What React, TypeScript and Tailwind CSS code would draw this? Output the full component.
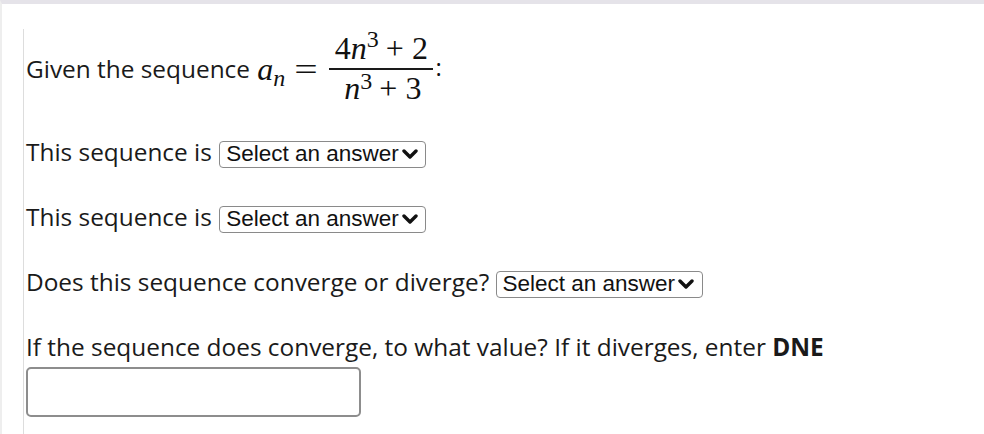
import React from "react";

function Chevron() {
  return (
    <svg width="16" height="10" viewBox="0 0 16 10" className="ml-[3px] shrink-0">
      <path d="M2 2 L8 8 L14 2" fill="none" stroke="#111" strokeWidth="3.4" strokeLinecap="round" strokeLinejoin="round" />
    </svg>
  );
}

function SelectBox() {
  return (
    <div className="inline-flex items-center h-[27px] w-[207px] border-[1.5px] border-[#8a8a8a] rounded-[4px] pl-[6px] pr-[6px] bg-white font-['Liberation_Sans',Arial,sans-serif] text-[22.5px] text-[#111] leading-none">
      <span className="whitespace-nowrap">Select an answer</span>
      <Chevron />
    </div>
  );
}

function Row({ children }: { children: React.ReactNode }) {
  return <div className="flex items-center h-[36px] leading-[36px] whitespace-nowrap">{children}</div>;
}

export default function App() {
  return (
    <div className="w-[984px] h-[434px] bg-white border-t-[4px] border-[#e5e3e9] border-l-[2px] border-l-[#eeeeee] overflow-hidden">
      <div className="pl-[21px] pt-[24px] h-full">
        <div className="border-l border-[#dddddd] pl-[2px] h-full font-['Open_Sans',sans-serif] text-[24.4px] text-[#1a1a1a]">
          <div className="flex items-center h-[80px] mt-[1px] whitespace-nowrap">
            <span className="leading-[36px]">Given the sequence&nbsp;</span>
            <span className="flex items-center font-['Liberation_Serif',serif] text-[32px] text-[#111]">
              <span className="leading-[36px] ml-[1px]">
                <i>a</i>
                <sub className="italic">n</sub>
              </span>
              <span className="leading-[36px] ml-[12px] mr-[14px] inline-block scale-x-[1.3]">=</span>
              <span className="inline-flex flex-col items-stretch">
                <span className="h-[39px] flex items-end justify-center">
                  <span className="leading-[36px] pb-[2px]">
                    4<i>n</i>
                    <sup>3</sup>
                    <span className="ml-[7px] mr-[8px]">+</span>2
                  </span>
                </span>
                <span className="h-[1.5px] bg-[#1a1a1a] w-[104px]" />
                <span className="h-[39px] flex items-start justify-center">
                  <span className="leading-[36px] pl-[3px]">
                    <i>n</i>
                    <sup className="top-[-0.4em]">3</sup>
                    <span className="ml-[7px] mr-[8px]">+</span>3
                  </span>
                </span>
              </span>
              <span className="leading-[36px] self-end mb-[24px] ml-[2px] font-['Open_Sans',sans-serif] text-[24px]">:</span>
            </span>
          </div>

          <div className="mt-[25px] flex flex-col gap-[29px]">
            <Row>
              <span>This sequence is&nbsp;</span>
              <span className="ml-[1px]"><SelectBox /></span>
            </Row>
            <Row>
              <span>This sequence is&nbsp;</span>
              <span className="ml-[1px]"><SelectBox /></span>
            </Row>
            <Row>
              <span>Does this sequence converge or diverge?&nbsp;</span>
              <span><SelectBox /></span>
            </Row>
            <div>
              <Row>
                <span>
                  If the sequence does converge, to what value? If it diverges, enter <b className="font-bold">DNE</b>
                </span>
              </Row>
              <div className="mt-[2px] w-[335px] h-[50px] border-2 border-[#8d8d8d] rounded-[5px] bg-white" />
            </div>
          </div>
        </div>
      </div>
    </div>
  );
}
